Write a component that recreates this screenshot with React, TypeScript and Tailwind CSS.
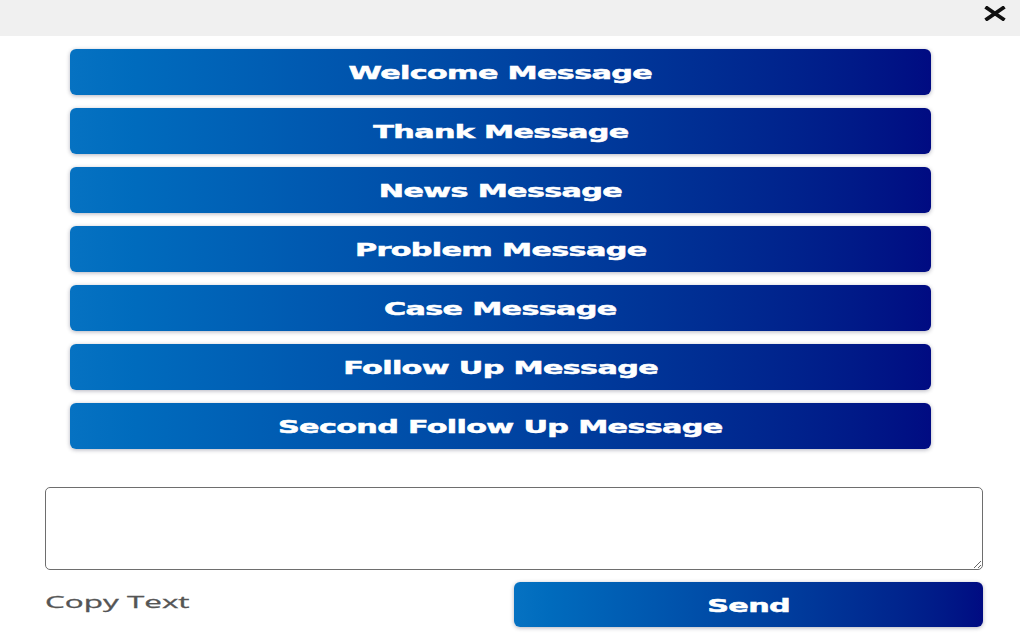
const templates = [
  'Welcome Message',
  'Thank Message',
  'News Message',
  'Problem Message',
  'Case Message',
  'Follow Up Message',
  'Second Follow Up Message',
];

function GradientButton({ label, className = '' }: { label: string; className?: string }) {
  return (
    <button
      type="button"
      className={`flex items-center justify-center rounded-[6px] bg-gradient-to-r from-[#0672c2] to-[#010b82] pt-[2px] text-white shadow-[0_1px_4px_rgba(0,0,40,0.3)] ${className}`}
    >
      <span className="inline-block scale-x-[1.68] font-['DejaVu_Sans',sans-serif] text-[18px] font-bold leading-none tracking-[-0.4px] [-webkit-text-stroke:0.5px_white]">
        {label}
      </span>
    </button>
  );
}

export default function App() {
  return (
    <div className="h-[638px] w-[1020px] overflow-hidden bg-white">
      <div className="flex h-[36px] items-start justify-end bg-[#f0f0f0] pr-[14px] pt-[6px]">
        <button type="button" aria-label="Close">
          <svg width="22" height="15" viewBox="0 0 22 15">
            <path d="M3 2 L19 13 M19 2 L3 13" stroke="#111" strokeWidth="3.8" strokeLinecap="square" />
          </svg>
        </button>
      </div>

      <div className="pl-[45px] pr-[37px]">
        <div className="ml-[25px] mr-[52px] mt-[13px] flex flex-col gap-[13px]">
          {templates.map((t) => (
            <GradientButton key={t} label={t} className="h-[46px] w-full" />
          ))}
        </div>

        <textarea className="mt-[38px] block h-[83px] w-full resize-y rounded-[5px] border-[1.5px] border-[#6e6e6e] p-2 outline-none" />

        <div className="mt-[12px] flex items-center justify-between">
          <span className="mb-[6px] inline-block origin-left scale-x-[1.85] font-['Open_Sans',sans-serif] text-[17px] text-[#555] [-webkit-text-stroke:0.3px_#555]">
            Copy Text
          </span>
          <GradientButton label="Send" className="h-[45px] w-[469px]" />
        </div>
      </div>
    </div>
  );
}
